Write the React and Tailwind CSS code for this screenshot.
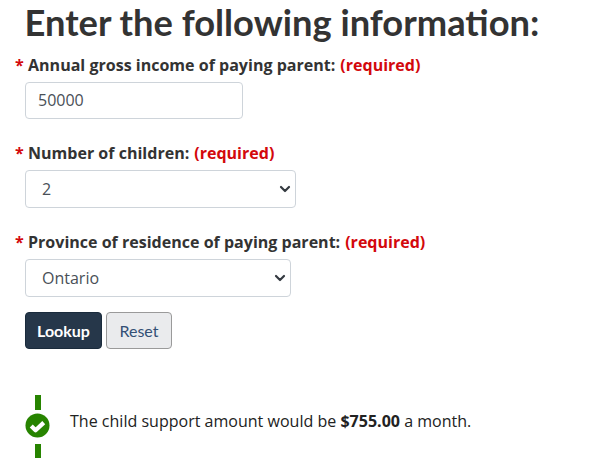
const Chevron = () => (
  <svg viewBox="0 0 12 12" className="h-[12px] w-[12px]">
    <path d="M2 4l4 4 4-4" fill="none" stroke="#343a40" strokeWidth="2.2" strokeLinecap="round" strokeLinejoin="round" />
  </svg>
);

const FieldLabel = ({ children }) => (
  <div className="flex h-[24px] items-center text-[16.05px] leading-[24px] font-bold text-[#333]">
    <span className="w-[13px] text-[#d3080c]">*</span>
    <span>{children}</span>
    <span className="ml-[5px] text-[#d3080c]">(required)</span>
  </div>
);

const FakeSelect = ({ value, width }) => (
  <div className={`ml-[10px] mt-[5px] flex h-[38px] items-center justify-between rounded-[4px] border border-[#ced4da] bg-white pl-[16px] pr-[4px] text-[16px] text-[#495057] ${width}`}>
    <span>{value}</span>
    <Chevron />
  </div>
);

const App = () => {
  return (
    <div className="h-[472px] w-[595px] overflow-hidden bg-white pl-[15px] font-['Open_Sans',sans-serif]">
      <h1 className="ml-[9.5px] h-[45px] font-['Lato',sans-serif] text-[36.3px] leading-[45px] font-bold whitespace-nowrap text-[#333]">
        Enter the following information:
      </h1>

      <div className="mt-[8px]">
        <FieldLabel>Annual gross income of paying parent:</FieldLabel>
        <div className="ml-[10px] mt-[5px] flex h-[37px] w-[218px] items-center rounded-[4px] border border-[#ced4da] bg-white pb-[1px] pl-[12px] text-[16px] text-[#495057]">
          50000
        </div>
      </div>

      <div className="mt-[22px]">
        <FieldLabel>Number of children:</FieldLabel>
        <FakeSelect value="2" width="w-[271px]" />
      </div>

      <div className="mt-[22px]">
        <FieldLabel>Province of residence of paying parent:</FieldLabel>
        <FakeSelect value="Ontario" width="w-[266px]" />
      </div>

      <div className="ml-[10px] mt-[15px] flex gap-[4px] font-['Lato',sans-serif] text-[16px]">
        <button className="h-[37px] w-[77px] rounded-[4px] border border-[#1a2b3c] bg-[#26374a] font-bold text-white">Lookup</button>
        <button className="h-[37px] w-[66px] rounded-[4px] border border-[#9a9a9a] bg-[#eaebed] text-[#335075]">Reset</button>
      </div>

      <div className="ml-[10px] mt-[46px] flex items-center">
        <div className="flex w-[25px] flex-col items-center">
          <div className="h-[15px] w-[6px] bg-[#278400]" />
          <svg viewBox="0 0 26 26" className="mt-[3px] mb-[6px] h-[25px] w-[25px]">
            <circle cx="13" cy="13" r="12.5" fill="#278400" />
            <path d="M6.5 13.5l4.5 4.5 8.5-8" fill="none" stroke="#fff" strokeWidth="4.4" strokeLinejoin="round" />
          </svg>
          <div className="h-[14px] w-[6px] bg-[#278400]" />
        </div>
        <p className="ml-[20px] -translate-y-[6px] text-[16.05px] leading-[24px] whitespace-nowrap text-[#222]">
          The child support amount would be <strong>$755.00</strong> a month.
        </p>
      </div>
    </div>
  );
};

export default App;
